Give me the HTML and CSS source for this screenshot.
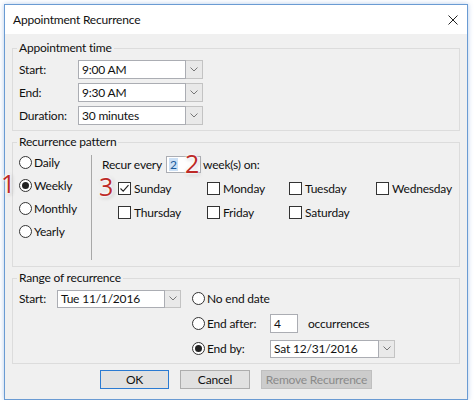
FILE: index.html
```html
<!DOCTYPE html>
<html lang="en">
<head>
    <meta charset="UTF-8">
    <title>Appointment Recurrence</title>
    <link rel="stylesheet" href="styles.css">
</head>
<body>
<div class="window">
    <div class="titlebar">
        <span class="title">Appointment Recurrence</span>
        <svg class="close" width="10" height="10" viewBox="0 0 10 10"><path d="M0.5 0.5 L9.5 9.5 M9.5 0.5 L0.5 9.5" stroke="#222" stroke-width="1"/></svg>
    </div>

    <div class="content">
        <fieldset class="group time">
            <legend>Appointment time</legend>
            <div class="time-grid">
                <span>Start:</span>
                <div class="combo"><span class="field">9:00 AM</span><span class="drop"><svg width="8" height="5" viewBox="0 0 8 5"><path d="M0.5 0.5 L4 4 L7.5 0.5" fill="none" stroke="#777"/></svg></span></div>
                <span>End:</span>
                <div class="combo"><span class="field">9:30 AM</span><span class="drop"><svg width="8" height="5" viewBox="0 0 8 5"><path d="M0.5 0.5 L4 4 L7.5 0.5" fill="none" stroke="#777"/></svg></span></div>
                <span>Duration:</span>
                <div class="combo"><span class="field">30 minutes</span><span class="drop"><svg width="8" height="5" viewBox="0 0 8 5"><path d="M0.5 0.5 L4 4 L7.5 0.5" fill="none" stroke="#777"/></svg></span></div>
            </div>
        </fieldset>

        <fieldset class="group pattern">
            <legend>Recurrence pattern</legend>
            <div class="pattern-body">
                <div class="freq">
                    <div class="option"><span class="radio"></span>Daily</div>
                    <div class="option"><span class="radio on"></span>Weekly</div>
                    <div class="option"><span class="radio"></span>Monthly</div>
                    <div class="option"><span class="radio"></span>Yearly</div>
                </div>
                <div class="weekly">
                    <div class="recur-row">
                        <span class="recur-label">Recur every</span>
                        <span class="num"><span class="sel">2</span></span>
                        <span class="weeks">week(s) on:</span>
                    </div>
                    <div class="days">
                        <div class="option"><span class="check on"><svg width="11" height="11" viewBox="0 0 11 11"><path d="M1.5 5.5 L4.2 8.2 L9.5 2.2" fill="none" stroke="#222" stroke-width="1.1"/></svg></span>Sunday</div>
                        <div class="option"><span class="check"></span>Monday</div>
                        <div class="option"><span class="check"></span>Tuesday</div>
                        <div class="option"><span class="check"></span>Wednesday</div>
                        <div class="option"><span class="check"></span>Thursday</div>
                        <div class="option"><span class="check"></span>Friday</div>
                        <div class="option"><span class="check"></span>Saturday</div>
                    </div>
                </div>
            </div>
        </fieldset>

        <fieldset class="group range">
            <legend>Range of recurrence</legend>
            <div class="range-body">
                <div class="range-start">
                    <span class="start-label">Start:</span>
                    <div class="combo short"><span class="field">Tue 11/1/2016</span><span class="drop"><svg width="8" height="5" viewBox="0 0 8 5"><path d="M0.5 0.5 L4 4 L7.5 0.5" fill="none" stroke="#777"/></svg></span></div>
                </div>
                <div class="end-grid">
                    <div class="option wide"><span class="radio"></span>No end date</div>
                    <div class="option"><span class="radio"></span>End after:</div>
                    <div class="count-row"><span class="count">4</span><span class="occ">occurrences</span></div>
                    <div class="option"><span class="radio on"></span>End by:</div>
                    <div class="combo end"><span class="field">Sat 12/31/2016</span><span class="drop"><svg width="8" height="5" viewBox="0 0 8 5"><path d="M0.5 0.5 L4 4 L7.5 0.5" fill="none" stroke="#777"/></svg></span></div>
                </div>
            </div>
        </fieldset>

        <div class="buttons">
            <button class="btn default">OK</button>
            <button class="btn cancel">Cancel</button>
            <button class="btn remove" disabled>Remove Recurrence</button>
        </div>
    </div>

    <!-- step numbers -->
    <span class="mark m1">1</span>
    <span class="mark m2">2</span>
    <span class="mark m3">3</span>
</div>
</body>
</html>
```

FILE: styles.css
```css
* {
    box-sizing: border-box;
}

body {
    margin: 0;
    background: #fff;
    font-family: Lato, "Open Sans", sans-serif;
    font-size: 12px;
    letter-spacing: -0.2px;
    color: #111;
}

.window {
    position: relative;
    margin: 4px 0 0 4px;
    width: 464px;
    height: 396px;
    border: 1px solid #6a9bd3;
    box-shadow: 0 0 5px rgba(90, 140, 210, 0.45);
    background: #f0f0f0;
    display: flex;
    flex-direction: column;
}

.titlebar {
    height: 29px;
    background: #fff;
    display: flex;
    align-items: center;
    justify-content: space-between;
    padding: 0 9px 0 8px;
}

.title {
    font-size: 12px;
    color: #111;
}

.content {
    flex: 1;
    padding: 6px 7px 0 7px;
}

.group {
    margin: 0;
    border: 1px solid #dcdcdc;
    min-width: 0;
}

.group legend {
    line-height: 16px;
    padding: 0 2px;
    margin-left: -2px;
}

/* appointment time */
.time {
    padding: 4px 6px 5px 6px;
}

.time-grid {
    display: grid;
    grid-template-columns: 59px auto;
    grid-auto-rows: 19px;
    row-gap: 4px;
    align-items: center;
}

.combo {
    display: flex;
    height: 19px;
}

.combo .field {
    width: 108px;
    border: 1px solid #abadb3;
    background: #fff;
    padding-left: 3px;
    display: flex;
    align-items: center;
}

.combo .drop {
    width: 17px;
    border: 1px solid #c3c3c3;
    border-left: none;
    background: #e9e9e9;
    display: flex;
    align-items: center;
    justify-content: center;
}

.combo.short {
    height: 18px;
}

.combo.short .drop,
.combo.end .drop {
    width: 16px;
}

.combo.end {
    height: 18px;
}

.combo.end .field {
    width: 109px;
}

/* radios and checkboxes */
.option {
    display: flex;
    align-items: center;
    white-space: nowrap;
}

.radio {
    width: 13px;
    height: 13px;
    border: 1px solid #333;
    border-radius: 50%;
    background: #fff;
    margin-right: 2px;
    display: flex;
    align-items: center;
    justify-content: center;
    flex: none;
}

.radio.on::after {
    content: "";
    width: 7px;
    height: 7px;
    border-radius: 50%;
    background: #222;
}

.check {
    width: 13px;
    height: 13px;
    border: 1px solid #333;
    background: #fff;
    margin-right: 3px;
    display: flex;
    align-items: center;
    justify-content: center;
    flex: none;
}

/* recurrence pattern */
.pattern {
    margin-top: 3px;
    padding: 1px 6px 6px 6px;
}

.pattern-body {
    display: flex;
    align-items: flex-start;
}

.freq {
    width: 72px;
    display: grid;
    grid-auto-rows: 23px;
}

.weekly {
    margin-top: 4px;
    height: 105px;
    border-left: 1px solid #a8a8a8;
    padding-left: 10px;
    flex: 1;
}

.recur-row {
    height: 18px;
    display: flex;
    align-items: center;
}

.recur-label {
    width: 64px;
}

.num {
    width: 35px;
    height: 17px;
    border: 1px solid #abadb3;
    background: #fff;
    padding-left: 2px;
    display: flex;
    align-items: center;
}

.num .sel {
    background: #cce0f5;
    color: #1a5a9c;
    padding: 0 1px;
    line-height: 13px;
}

.weeks {
    margin-left: 2px;
}

.days {
    margin-top: 3px;
    padding-left: 16px;
    display: grid;
    grid-template-columns: 89px 82px 87px auto;
    grid-auto-rows: 24px;
}

/* range of recurrence */
.range {
    margin-top: 3px;
    padding: 0 6px 2px 6px;
}

.range-body {
    display: flex;
    align-items: flex-start;
}

.range-start {
    height: 25px;
    display: flex;
    align-items: center;
}

.start-label {
    width: 38px;
}

.end-grid {
    margin-left: 11px;
    display: grid;
    grid-template-columns: 78px auto;
    grid-auto-rows: 25px;
    align-items: center;
}

.end-grid .wide {
    grid-column: 1 / 3;
}

.count-row {
    display: flex;
    align-items: center;
}

.count {
    width: 28px;
    height: 19px;
    border: 1px solid #abadb3;
    background: #fff;
    padding-left: 3px;
    display: flex;
    align-items: center;
}

.occ {
    margin-left: 10px;
}

/* dialog buttons */
.buttons {
    margin-top: 6px;
    padding-left: 88px;
    display: flex;
    gap: 11px;
}

.btn {
    height: 19px;
    padding: 0;
    font-family: inherit;
    font-size: 12px;
    letter-spacing: inherit;
    color: #111;
    background: #e1e1e1;
    border: 1px solid #adadad;
}

.btn.default {
    width: 69px;
    border-color: #2a7ad2;
}

.btn.cancel {
    width: 70px;
}

.btn.remove {
    width: 111px;
    background: #cccccc;
    border-color: #bfbfbf;
    color: #8a8a8a;
}

/* red step numbers laid over the dialog */
.mark {
    position: absolute;
    font-family: "Open Sans", sans-serif;
    font-size: 25px;
    line-height: 25px;
    letter-spacing: 0;
    color: #bd2a27;
    text-shadow: 0 0 2px #fff, 0 0 3px #fff, 0 0 4px #fff, 0 0 4px #fff, 1px 1px 4px rgba(0, 0, 0, 0.4);
}

.m1 {
    left: -4px;
    top: 166px;
}

.m2 {
    left: 180px;
    top: 146px;
}

.m3 {
    left: 94px;
    top: 169px;
}
```
